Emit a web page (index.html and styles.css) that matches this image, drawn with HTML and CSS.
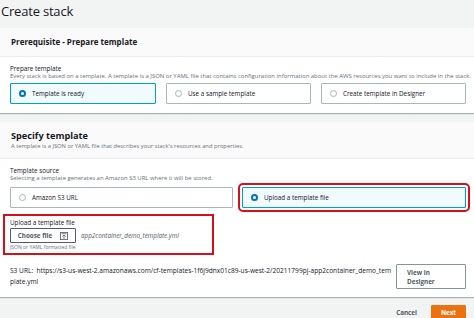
FILE: index.html
```html
<!DOCTYPE html>
<html>
<head>
	<meta charset="utf-8">
	<meta name="viewport" content="width=device-width, initial-scale=1">
	<title>Create stack</title>
	<link rel="stylesheet" href="styles.css">
</head>
<body>
<h1 class="page-title">Create stack</h1>

<div class="card">
	<div class="card-header">
		<h2 class="card-title small">Prerequisite - Prepare template</h2>
	</div>
	<div class="card-body first">
		<div class="field-label">Prepare template</div>
		<div class="field-desc">Every stack is based on a template. A template is a JSON or YAML file that contains configuration information about the AWS resources you want to include in the stack.</div>
		<div class="tiles three">
			<div class="tile selected"><span class="radio on"></span>Template is ready</div>
			<div class="tile"><span class="radio"></span>Use a sample template</div>
			<div class="tile"><span class="radio"></span>Create template in Designer</div>
		</div>
	</div>
</div>

<div class="card second">
	<div class="card-header tall">
		<h2 class="card-title">Specify template</h2>
		<div class="field-desc">A template is a JSON or YAML file that describes your stack's resources and properties.</div>
	</div>
	<div class="card-body">
		<div class="field-label">Template source</div>
		<div class="field-desc">Selecting a template generates an Amazon S3 URL where it will be stored.</div>
		<div class="tiles two">
			<div class="tile"><span class="radio"></span>Amazon S3 URL</div>
			<div class="tile selected marked"><span class="radio on"></span>Upload a template file</div>
		</div>

		<div class="upload marked-box">
			<div class="field-label">Upload a template file</div>
			<div class="upload-row">
				<button class="btn choose">Choose file
					<svg class="up-icon" viewBox="0 0 10 10" width="8" height="8">
						<rect x="0.5" y="0.5" width="9" height="9" fill="none" stroke="#545b64" stroke-width="1"/>
						<line x1="2" y1="2.2" x2="8" y2="2.2" stroke="#545b64" stroke-width="1"/>
						<path d="M5 8.5 V4 M3 5.8 L5 3.8 L7 5.8" fill="none" stroke="#545b64" stroke-width="1"/>
					</svg>
				</button>
				<span class="file-name">app2container_demo_template.yml</span>
			</div>
			<div class="hint">JSON or YAML formatted file</div>
		</div>

		<div class="s3-row">
			<div class="s3-url">S3 URL:&nbsp; https://s3-us-west-2.amazonaws.com/cf-templates-1f6j9dnx01c89-us-west-2/20211799pj-app2container_demo_template.yml</div>
			<button class="btn designer">View in<br>Designer</button>
		</div>
	</div>
</div>

<div class="footer">
	<span class="cancel">Cancel</span>
	<button class="btn next">Next</button>
</div>
</body>
</html>
```

FILE: styles.css
```css
body {
	margin: 0;
	background: #f2f3f3;
	font-family: "Open Sans", "Noto Sans", sans-serif;
	color: #16191f;
	overflow: hidden;
}

.page-title {
	margin: 0;
	height: 28px;
	padding-left: 1px;
	font-size: 13px;
	font-weight: 400;
	line-height: 22px;
	letter-spacing: -0.2px;
	color: #16191f;
}

.card {
	background: #fff;
	box-shadow: 0 1px 1px rgba(0, 28, 36, 0.3);
}
.card.second {
	margin-top: 9px;
}

.card-header {
	background: #fafafa;
	border-bottom: 1px solid #eaeded;
	height: 28px;
	padding-left: 11px;
	display: flex;
	flex-direction: column;
	justify-content: center;
}
.card-header.tall {
	height: 36px;
	padding-left: 11px;
}
.card-title {
	margin: 0;
	font-size: 9.2px;
	font-weight: 700;
	line-height: 12px;
}
.card-title.small {
	font-size: 8px;
}
.card-header .field-desc {
	margin-top: 1px;
	font-size: 5.8px;
}

.card-body {
	padding: 8px 8px 3px 10px;
}
.card-body.first {
	padding-bottom: 9px;
}

.field-label {
	font-size: 6.3px;
	line-height: 8px;
}
.field-desc {
	font-size: 5.95px;
	line-height: 7px;
	color: #687078;
	white-space: nowrap;
}

.tiles {
	display: grid;
	gap: 9px;
	margin-top: 3px;
}
.tiles.three {
	grid-template-columns: 146px 145px 145px;
	gap: 10px;
}
.tiles.two {
	grid-template-columns: 223px 224px;
	margin-top: 5px;
}

.tile {
	height: 19px;
	border: 1px solid #aab7b8;
	border-radius: 1px;
	display: flex;
	align-items: center;
	padding-left: 8px;
	font-size: 6.3px;
	color: #16191f;
}
.tile.selected {
	background: #f1faff;
	border-color: #00a1c9;
}
.tile.marked {
	outline: 2px solid #d5101c;
	outline-offset: 2px;
}

.radio {
	width: 5px;
	height: 5px;
	border: 1px solid #aab7b8;
	border-radius: 50%;
	margin-right: 6px;
	background: #fff;
	flex: none;
}
.radio.on {
	width: 3px;
	height: 3px;
	border: 2px solid #0073bb;
}

.upload {
	margin: 6px 0 0 -7px;
	width: 202px;
	padding: 3px 0 2px 5px;
	border: 2px solid #d5101c;
}
.upload-row {
	display: flex;
	align-items: center;
	margin-top: 1px;
}
.btn {
	font-family: inherit;
	background: #fff;
	border: 1px solid #545b64;
	border-radius: 1px;
	color: #545b64;
	font-weight: 700;
	padding: 0;
	cursor: pointer;
}
.choose {
	width: 66px;
	height: 15px;
	font-size: 6.3px;
	display: flex;
	align-items: center;
	justify-content: center;
	gap: 8px;
}
.up-icon {
	display: block;
}
.file-name {
	margin-left: 5px;
	font-size: 6.3px;
	font-style: italic;
	color: #545b64;
}
.hint {
	font-size: 5px;
	line-height: 7px;
	color: #687078;
	margin-top: 1px;
}

.s3-row {
	display: flex;
	align-items: flex-start;
	margin-top: 9px;
	height: 30px;
}
.s3-url {
	width: 384px;
	font-size: 6.6px;
	line-height: 11px;
	word-break: break-all;
	margin-top: 1px;
}
.designer {
	width: 70px;
	height: 25px;
	margin-left: 2px;
	font-size: 6.3px;
	text-align: left;
	padding-left: 10px;
	line-height: 9px;
	border-color: #879596;
}

.footer {
	display: flex;
	justify-content: flex-end;
	align-items: center;
	gap: 14px;
	padding: 8px 8px 0 0;
}
.cancel {
	font-size: 6.3px;
	font-weight: 700;
	color: #545b64;
}
.next {
	width: 35px;
	height: 15px;
	background: #ec7211;
	border-color: #ec7211;
	color: #fff;
	font-size: 6.3px;
}
```
